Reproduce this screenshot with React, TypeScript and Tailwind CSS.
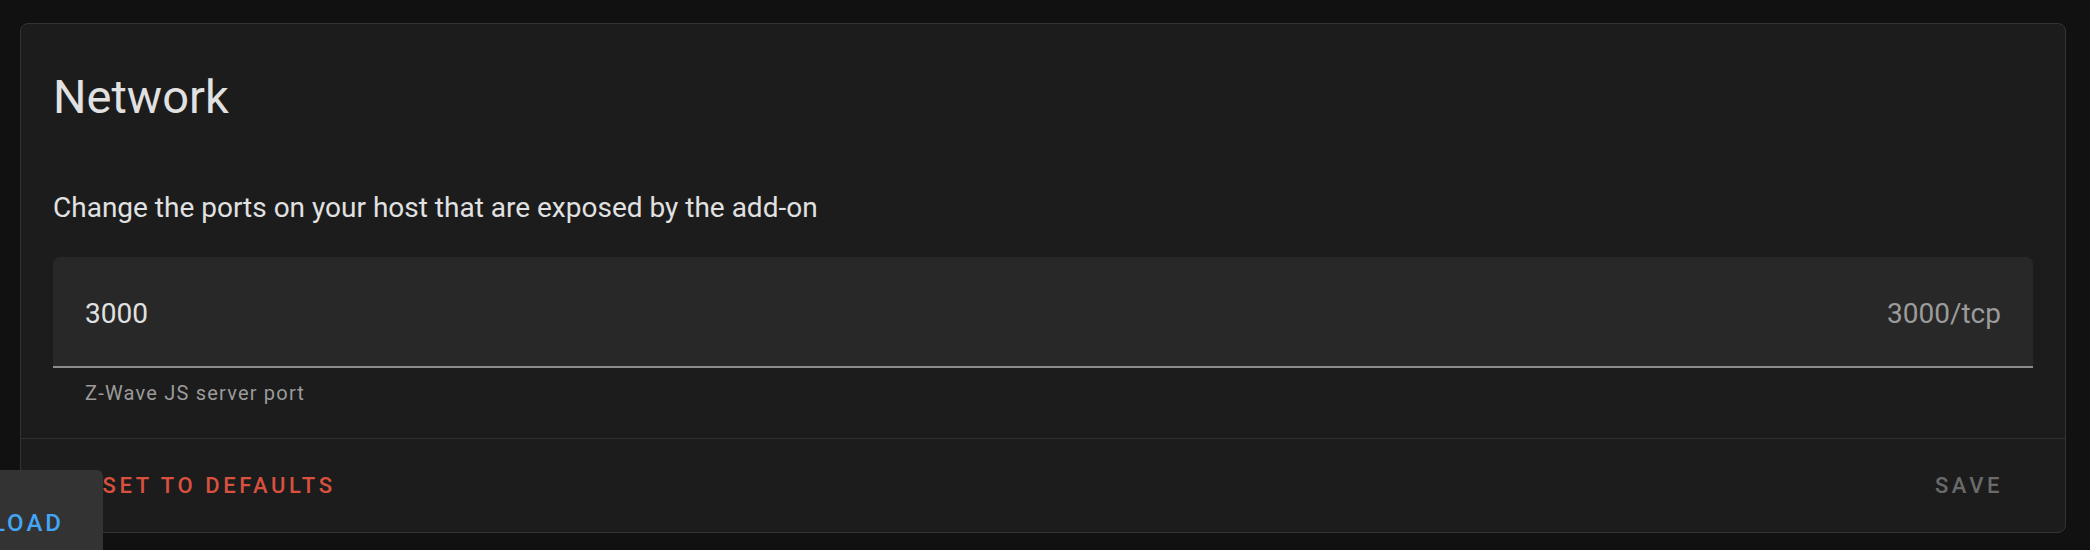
import React from "react";

export default function App() {
  return (
    <div
      className="relative w-full h-[550px] overflow-hidden bg-[#111111] pt-[23px] pl-[20px] pr-[24px]"
      style={{ fontFamily: "Roboto, 'Noto Sans', sans-serif" }}
    >
      <div className="rounded-[8px] border border-[#333333] bg-[#1c1c1c]">
        <div className="px-[32px] pt-[49px]">
          <h1 className="text-[47px] leading-[48px] font-normal text-[#e1e1e1]">Network</h1>
          <p className="mt-[73px] text-[28px] leading-[28px] text-[#e1e1e1]">
            Change the ports on your host that are exposed by the add-on
          </p>
          <div className="mt-[35px]">
            <div className="flex h-[109px] items-center justify-between rounded-t-[7px] bg-[#282828] px-[32px] pt-[4px]">
              <span className="text-[28px] leading-[28px] text-[#e1e1e1]">3000</span>
              <span className="text-[28px] leading-[28px] text-[#9b9b9b]">3000/tcp</span>
            </div>
            <div className="h-[2px] bg-[#8c8c8c]" />
            <div className="mt-[16px] pl-[32px] text-[20px] leading-[19px] tracking-[1.2px] text-[#9b9b9b]">
              Z-Wave JS server port
            </div>
          </div>
          <div className="h-[35px]" />
        </div>
        <div className="flex h-[94px] items-center justify-between border-t border-[#303030] pl-[48px] pr-[62px]">
          <span className="text-[22px] leading-[22px] font-medium tracking-[3.6px] text-[#d9503f]">
            RESET TO DEFAULTS
          </span>
          <span className="text-[22px] leading-[22px] font-medium tracking-[3.6px] text-[#6a6a6a]">
            SAVE
          </span>
        </div>
      </div>
      <div className="absolute left-0 top-[470px] h-[100px] w-[103px] overflow-hidden rounded-tr-[6px] bg-[#333333]">
        <div className="flex justify-end pr-[39px] pt-[41px]">
          <span className="whitespace-nowrap text-[24px] leading-[24px] font-medium tracking-[3px] text-[#42a5f5]">
            RELOAD
          </span>
        </div>
      </div>
    </div>
  );
}
